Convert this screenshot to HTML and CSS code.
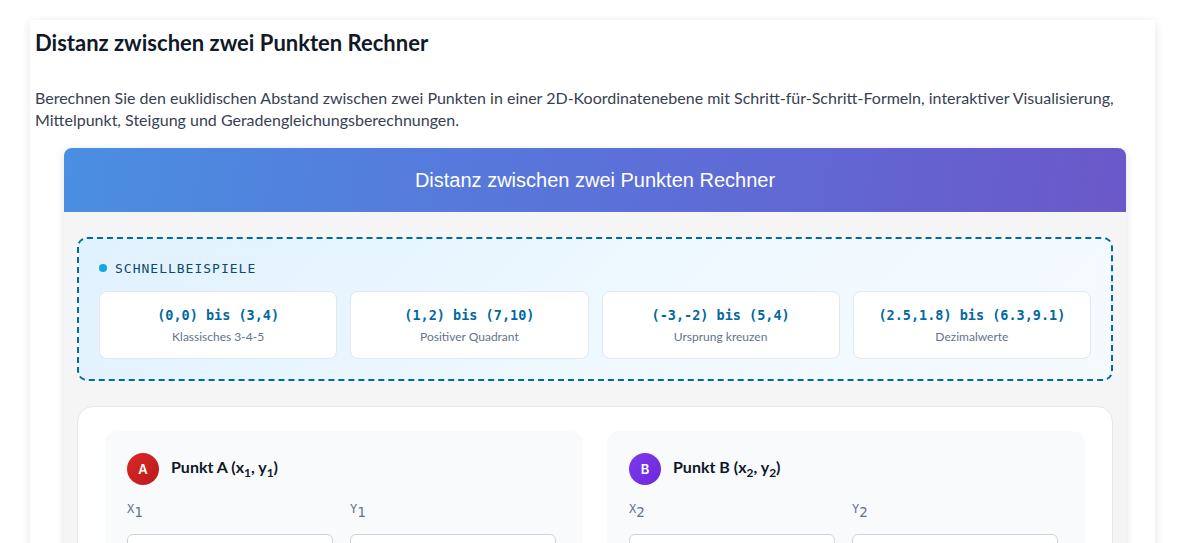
FILE: index.html
```html
<!DOCTYPE html>
<html lang="de">
  <head>
    <meta charset="UTF-8" />
    <meta name="viewport" content="width=device-width, initial-scale=1.0" />
    <title>Distanz zwischen zwei Punkten Rechner</title>
    <link rel="stylesheet" href="styles.css">
  </head>
  <body>
    <article class="page-card">
      <h1>Distanz zwischen zwei Punkten Rechner</h1>
      <p class="intro">
        Berechnen Sie den euklidischen Abstand zwischen zwei Punkten in einer 2D-Koordinatenebene mit
        Schritt-für-Schritt-Formeln, interaktiver Visualisierung, Mittelpunkt, Steigung und
        Geradengleichungsberechnungen.
      </p>

      <div class="calculator">
        <div class="calc-header">Distanz zwischen zwei Punkten Rechner</div>

        <div class="calc-body">
          <!-- Quick examples -->
          <div class="examples">
            <div class="examples-label"><span class="dot"></span>Schnellbeispiele</div>
            <div class="examples-grid">
              <button class="example-card">
                <span class="example-coords">(0,0) bis (3,4)</span>
                <span class="example-desc">Klassisches 3-4-5</span>
              </button>
              <button class="example-card">
                <span class="example-coords">(1,2) bis (7,10)</span>
                <span class="example-desc">Positiver Quadrant</span>
              </button>
              <button class="example-card">
                <span class="example-coords">(-3,-2) bis (5,4)</span>
                <span class="example-desc">Ursprung kreuzen</span>
              </button>
              <button class="example-card">
                <span class="example-coords">(2.5,1.8) bis (6.3,9.1)</span>
                <span class="example-desc">Dezimalwerte</span>
              </button>
            </div>
          </div>

          <!-- Point inputs -->
          <div class="input-section">
            <div class="points">
              <div class="point-panel">
                <div class="point-title">
                  <span class="badge badge-a">A</span>
                  <span>Punkt A (x<sub>1</sub>, y<sub>1</sub>)</span>
                </div>
                <div class="fields">
                  <label class="field">
                    <span class="field-label">x<sub>1</sub></span>
                    <input type="number" value="0">
                  </label>
                  <label class="field">
                    <span class="field-label">y<sub>1</sub></span>
                    <input type="number" value="0">
                  </label>
                </div>
              </div>
              <div class="point-panel">
                <div class="point-title">
                  <span class="badge badge-b">B</span>
                  <span>Punkt B (x<sub>2</sub>, y<sub>2</sub>)</span>
                </div>
                <div class="fields">
                  <label class="field">
                    <span class="field-label">x<sub>2</sub></span>
                    <input type="number" value="3">
                  </label>
                  <label class="field">
                    <span class="field-label">y<sub>2</sub></span>
                    <input type="number" value="4">
                  </label>
                </div>
              </div>
            </div>
            <div class="actions">
              <button class="btn-primary">Berechnen</button>
              <button class="btn-secondary">Zurücksetzen</button>
            </div>
          </div>
        </div>
      </div>
    </article>
  </body>
</html>
```

FILE: styles.css
```css
* {
  box-sizing: border-box;
}

html {
  overflow-y: scroll;
}

body {
  margin: 0;
  padding: 20px 45px 40px 30px;
  background: #fff;
  font-family: 'Lato', 'Open Sans', sans-serif;
  color: #1e293b;
}

.page-card {
  background: #fff;
  padding: 4px 5px 30px;
  box-shadow: 0 2px 10px rgba(0, 0, 0, 0.1);
}

.page-card h1 {
  margin: 6px 0 0;
  font-size: 22px;
  line-height: 26px;
  font-weight: 700;
  color: #111827;
}

.intro {
  margin: 31px 0 17px;
  font-size: 16px;
  line-height: 22px;
  color: #374151;
}

/* Calculator widget */
.calculator {
  width: 1062px;
  margin-left: 29px;
  border-radius: 8px;
  overflow: hidden;
  background: #f5f5f5;
  box-shadow: 0 2px 10px rgba(0, 0, 0, 0.12);
}

.calc-header {
  height: 64px;
  display: flex;
  align-items: center;
  justify-content: center;
  background: linear-gradient(100deg, #4a8fe1 0%, #5c6fd8 55%, #6b58c9 100%);
  color: #fff;
  font-family: 'Liberation Sans', Arial, sans-serif;
  font-size: 20px;
}

.calc-body {
  padding: 25px 13px 30px;
}

.examples {
  border: 2px dashed #0369a1;
  border-radius: 10px;
  padding: 20px;
  background: linear-gradient(135deg, #e0f2fe 0%, #f0f9ff 60%, #f5faff 100%);
}

.examples-label {
  display: flex;
  align-items: center;
  gap: 8px;
  height: 18px;
  margin-bottom: 14px;
  font-family: 'DejaVu Sans Mono', monospace;
  font-size: 13px;
  letter-spacing: 1px;
  text-transform: uppercase;
  color: #0c4a6e;
}

.dot {
  width: 8px;
  height: 8px;
  border-radius: 50%;
  background: #0ea5e9;
}

.examples-grid {
  display: grid;
  grid-template-columns: repeat(4, 1fr);
  gap: 13px;
}

.example-card {
  display: flex;
  flex-direction: column;
  align-items: center;
  gap: 5px;
  height: 68px;
  padding: 14px 8px;
  background: #fff;
  border: 1px solid #e2e8f0;
  border-radius: 8px;
  cursor: pointer;
}

.example-coords {
  font-family: 'DejaVu Sans Mono', monospace;
  font-size: 13.5px;
  line-height: 18px;
  font-weight: 700;
  color: #0369a1;
}

.example-desc {
  font-family: 'Lato', sans-serif;
  font-size: 12px;
  line-height: 15px;
  color: #64748b;
}

.input-section {
  margin-top: 25px;
  background: #fff;
  border: 1px solid #e2e8f0;
  border-radius: 16px;
  padding: 24px 27px 28px;
}

.points {
  display: grid;
  grid-template-columns: minmax(0, 1fr) minmax(0, 1fr);
  gap: 24px;
}

.point-panel {
  min-width: 0;
  background: #f8fafc;
  border-radius: 12px;
  padding: 22px 27px 22px 22px;
}

.point-title {
  display: flex;
  align-items: center;
  gap: 12px;
  font-size: 16px;
  font-weight: 700;
  color: #0f172a;
}

.point-title sub {
  font-size: 0.75em;
}

.badge {
  width: 32px;
  height: 32px;
  border-radius: 50%;
  display: flex;
  align-items: center;
  justify-content: center;
  color: #fff;
  font-family: 'Inter', sans-serif;
  font-size: 13px;
  font-weight: 600;
}

.badge-a {
  background: linear-gradient(135deg, #dc2626, #b91c1c);
}

.badge-b {
  background: linear-gradient(135deg, #7c3aed, #6d28d9);
}

.fields {
  display: grid;
  grid-template-columns: minmax(0, 1fr) minmax(0, 1fr);
  gap: 17px;
  margin-top: 17px;
}

.field {
  display: flex;
  flex-direction: column;
  gap: 14px;
  min-width: 0;
}

.field-label {
  font-family: 'DejaVu Sans Mono', monospace;
  font-size: 12px;
  text-transform: uppercase;
  color: #64748b;
}

.field-label sub {
  font-size: 14px;
  vertical-align: -4px;
}

.field input {
  width: 100%;
  height: 42px;
  padding: 0 12px;
  border: 1px solid #cbd5e1;
  border-radius: 6px;
  font-size: 16px;
  background: #fff;
}

.actions {
  display: flex;
  justify-content: center;
  gap: 12px;
  margin-top: 24px;
}

.btn-primary,
.btn-secondary {
  padding: 12px 28px;
  border-radius: 8px;
  font-size: 16px;
  cursor: pointer;
}

.btn-primary {
  border: none;
  background: linear-gradient(100deg, #4a8fe1, #6b58c9);
  color: #fff;
}

.btn-secondary {
  border: 1px solid #cbd5e1;
  background: #fff;
  color: #334155;
}
```
